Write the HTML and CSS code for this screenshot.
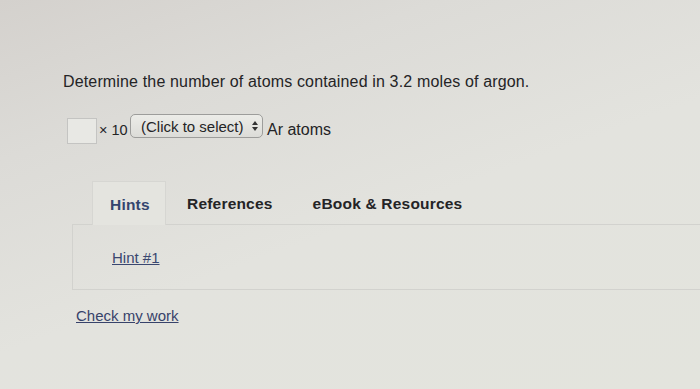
FILE: index.html
```html
<!DOCTYPE html>
<html>
<head>
<meta charset="utf-8">
<link rel="stylesheet" href="styles.css">
</head>
<body>
<div class="page">
  <p class="question">Determine the number of atoms contained in 3.2 moles of argon.</p>
  <div class="answer">
    <span class="box"></span>
    <span class="times">× 10</span>
    <span class="select">(Click to select)<span class="arrows"><span class="up"></span><span class="down"></span></span></span>
    <span class="unit">Ar atoms</span>
  </div>
  <div class="tabs">
    <span class="tab active">Hints</span>
    <span class="tab refs">References</span>
    <span class="tab ebook">eBook &amp; Resources</span>
  </div>
  <div class="panel">
    <a class="hint">Hint #1</a>
  </div>
  <a class="check">Check my work</a>
</div>
</body>
</html>
```
FILE: styles.css
```css
html, body {
  margin: 0;
  height: 100%;
}
body {
  width: 700px;
  height: 389px;
  overflow: hidden;
  background: linear-gradient(160deg, #d4d1cd 0%, #dcdbd7 25%, #e3e3de 55%, #e3e4dd 100%);
  font-family: "Liberation Sans", Arial, sans-serif;
  color: #242426;
}
.page {
  padding: 72px 0 0 63px;
}
.question {
  margin: 0;
  font-size: 16px;
  line-height: 20px;
  letter-spacing: 0.15px;
}
.answer {
  display: flex;
  align-items: center;
  margin: 21px 0 0 4px;
  height: 30px;
}
.box {
  width: 28px;
  height: 24px;
  border: 1px solid #c4c4c2;
  background: #e8e8e4;
  margin-top: 5px;
}
.times {
  font-size: 14.5px;
  margin-left: 2px;
  margin-top: 4px;
  width: 31px;
}
.select {
  display: flex;
  align-items: center;
  height: 22px;
  width: 121px;
  padding-left: 10px;
  border: 1px solid #9d9d9b;
  border-radius: 5px;
  background: linear-gradient(#ecece8, #dcdcd8);
  font-size: 15px;
  margin-top: -4px;
  box-sizing: content-box;
}
.arrows {
  display: flex;
  flex-direction: column;
  gap: 2px;
  margin-left: 8px;
}
.up {
  width: 0; height: 0;
  border-left: 3px solid transparent;
  border-right: 3px solid transparent;
  border-bottom: 4px solid #333;
}
.down {
  width: 0; height: 0;
  border-left: 3px solid transparent;
  border-right: 3px solid transparent;
  border-top: 4px solid #333;
}
.unit {
  font-size: 16px;
  margin-left: 4px;
  margin-top: 4px;
}
.tabs {
  display: flex;
  margin: 38px 0 0 29px;
  height: 43px;
  font-size: 15.5px;
  font-weight: bold;
  letter-spacing: 0.2px;
}
.tab {
  display: flex;
  align-items: center;
  box-sizing: border-box;
  height: 43px;
  padding-top: 3px;
}
.tab.active {
  width: 74px;
  padding-left: 17px;
  color: #34456e;
  border: 1px solid #d6d6d2;
  border-bottom: none;
  background: #e4e4df;
  position: relative;
  z-index: 1;
  height: 44px;
}
.refs {
  margin-left: 21px;
}
.ebook {
  margin-left: 40px;
}
.panel {
  margin-left: 9px;
  height: 64px;
  border: 1px solid #d2d2ce;
  border-right: none;
  display: flex;
  align-items: center;
  padding-left: 39px;
}
.hint {
  font-size: 15px;
  color: #3a4770;
  text-decoration: underline;
  margin-top: 1px;
}
.check {
  display: inline-block;
  margin: 17px 0 0 13px;
  font-size: 15px;
  color: #37426a;
  text-decoration: underline;
}
```
